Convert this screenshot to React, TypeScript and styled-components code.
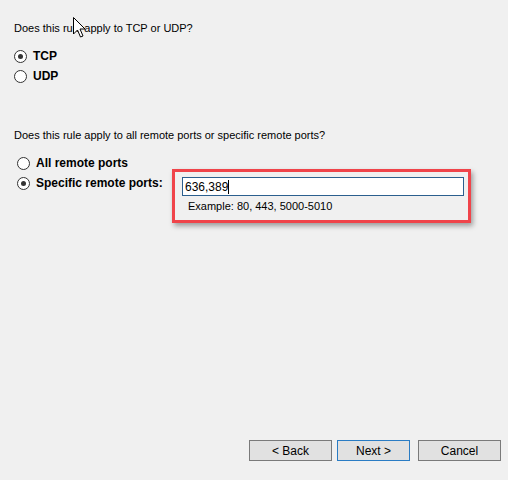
import styled, { createGlobalStyle } from "styled-components";

const GlobalStyle = createGlobalStyle`
    html, body {
        margin: 0;
        padding: 0;
        background: #f0f0f0;
    }
    body {
        font-family: "Liberation Sans", Arial, sans-serif;
        font-size: 11px;
        color: #000;
    }
`;

const Page = styled.div`
    position: relative;
    width: 508px;
    height: 480px;
    box-sizing: border-box;
    padding: 21px 0 19px 14px;
    display: flex;
    flex-direction: column;
    overflow: hidden;
`;

const Question = styled.div<{ gap?: number }>`
    line-height: 14px;
    margin-top: ${(props) => props.gap || 0}px;
`;

const OptionList = styled.div<{ indent?: number; gap?: number }>`
    display: flex;
    flex-direction: column;
    padding-left: ${(props) => props.indent || 0}px;
    margin-top: ${(props) => props.gap || 0}px;
`;

const OptionRow = styled.label<{ width?: number }>`
    display: flex;
    align-items: center;
    gap: 6px;
    height: 20px;
    width: ${(props) => (props.width ? `${props.width}px` : "auto")};
    font-size: 12px;
    font-weight: bold;
    flex-shrink: 0;
`;

const RadioCircle = styled.span<{ checked?: boolean }>`
    width: 13px;
    height: 13px;
    box-sizing: border-box;
    border-radius: 50%;
    border: 1px solid #333;
    background: #fff;
    display: flex;
    align-items: center;
    justify-content: center;

    &::after {
        content: "";
        width: 5px;
        height: 5px;
        border-radius: 50%;
        background: ${(props) => (props.checked ? "#333" : "transparent")};
    }
`;

const SpecificRow = styled.div`
    display: flex;
    align-items: flex-start;
`;

const Highlight = styled.div`
    margin-top: -4px;
    width: 299px;
    height: 54px;
    box-sizing: border-box;
    border: 3px solid #f0444a;
    padding: 5px 4px 0 7px;
    box-shadow: 2px 3px 5px rgba(0, 0, 0, 0.35);
`;

const PortField = styled.div`
    height: 19px;
    box-sizing: border-box;
    border: 1px solid #2b5f8e;
    background: #fff;
    padding: 0 2px;
    display: flex;
    align-items: center;
    font-size: 12px;
`;

const Caret = styled.span`
    display: inline-block;
    width: 1px;
    height: 14px;
    background: #000;
`;

const Hint = styled.div`
    padding: 3px 0 0 6px;
    line-height: 14px;
`;

const ButtonBar = styled.div`
    margin-top: auto;
    display: flex;
    padding-left: 235px;
`;

const Button = styled.button<{ primary?: boolean; width?: number; gap?: number }>`
    width: ${(props) => props.width || 83}px;
    height: 21px;
    margin-left: ${(props) => props.gap || 0}px;
    box-sizing: border-box;
    border: 1px solid ${(props) => (props.primary ? "#2a7cc4" : "#7a7a7a")};
    background: #e1e1e1;
    font-family: "Liberation Sans", Arial, sans-serif;
    font-size: 12px;
    color: #000;
    padding: 0;
`;

const Pointer = styled.svg`
    position: absolute;
    left: 73px;
    top: 17px;
`;

function Radio(props: { label: string; checked?: boolean; width?: number }) {
    return (
        <OptionRow width={props.width}>
            <RadioCircle checked={props.checked} />
            {props.label}
        </OptionRow>
    );
}

export default function App() {
    return (
        <Page>
            <GlobalStyle />
            <Question>Does this rule apply to TCP or UDP?</Question>
            <OptionList gap={11}>
                <Radio checked label="TCP" />
                <Radio label="UDP" />
            </OptionList>
            <Question gap={42}>Does this rule apply to all remote ports or specific remote ports?</Question>
            <OptionList indent={3} gap={11}>
                <Radio label="All remote ports" />
                <SpecificRow>
                    <Radio checked label="Specific remote ports:" width={155} />
                    <Highlight>
                        <PortField>
                            636,389
                            <Caret />
                        </PortField>
                        <Hint>Example: 80, 443, 5000-5010</Hint>
                    </Highlight>
                </SpecificRow>
            </OptionList>
            <ButtonBar>
                <Button>&lt; Back</Button>
                <Button primary width={73} gap={5}>Next &gt;</Button>
                <Button gap={8}>Cancel</Button>
            </ButtonBar>
            <Pointer width="13" height="21" viewBox="0 0 13 21">
                <path
                    d="M0.5 0.5 L0.5 17 L4.5 13 L7.5 20 L10 19 L7 12 L12 12 Z"
                    fill="#fff"
                    stroke="#000"
                    strokeWidth="1"
                    strokeLinejoin="miter"
                />
            </Pointer>
        </Page>
    );
}
